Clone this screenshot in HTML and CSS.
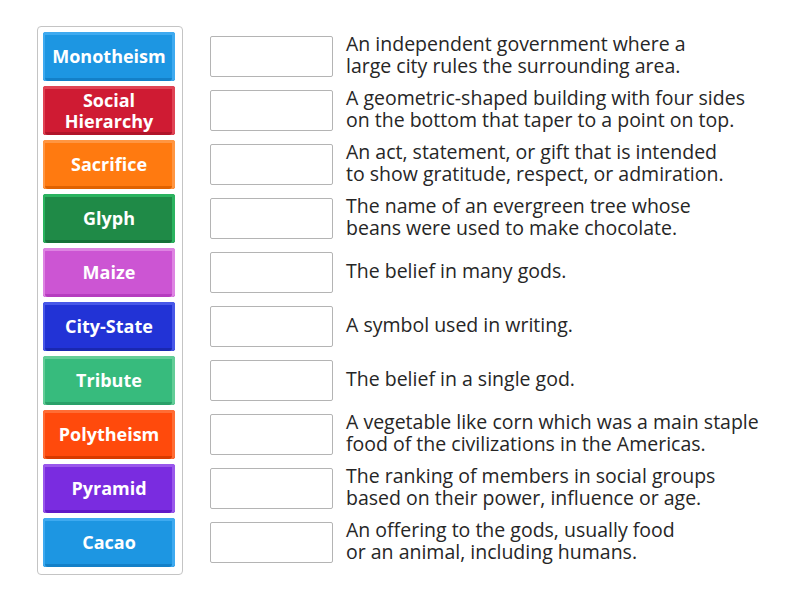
FILE: index.html
```html
<!DOCTYPE html>
<html>
<head>
<meta charset="utf-8">
<link rel="stylesheet" href="styles.css">
</head>
<body>
<div class="page">
  <div class="tiles">
    <div class="tile blue">Monotheism</div>
    <div class="tile red">Social<br>Hierarchy</div>
    <div class="tile orange">Sacrifice</div>
    <div class="tile green">Glyph</div>
    <div class="tile pink">Maize</div>
    <div class="tile indigo">City-State</div>
    <div class="tile mint">Tribute</div>
    <div class="tile vermilion">Polytheism</div>
    <div class="tile purple">Pyramid</div>
    <div class="tile blue">Cacao</div>
  </div>
  <div class="rows">
    <div class="row"><div class="slot"></div><div class="def">An independent government where a<br>large city rules the surrounding area.</div></div>
    <div class="row"><div class="slot"></div><div class="def">A geometric-shaped building with four sides<br>on the bottom that taper to a point on top.</div></div>
    <div class="row"><div class="slot"></div><div class="def">An act, statement, or gift that is intended<br>to show gratitude, respect, or admiration.</div></div>
    <div class="row"><div class="slot"></div><div class="def">The name of an evergreen tree whose<br>beans were used to make chocolate.</div></div>
    <div class="row"><div class="slot"></div><div class="def">The belief in many gods.</div></div>
    <div class="row"><div class="slot"></div><div class="def">A symbol used in writing.</div></div>
    <div class="row"><div class="slot"></div><div class="def">The belief in a single god.</div></div>
    <div class="row"><div class="slot"></div><div class="def">A vegetable like corn which was a main staple<br>food of the civilizations in the Americas.</div></div>
    <div class="row"><div class="slot"></div><div class="def">The ranking of members in social groups<br>based on their power, influence or age.</div></div>
    <div class="row"><div class="slot"></div><div class="def">An offering to the gods, usually food<br>or an animal, including humans.</div></div>
  </div>
</div>
</body>
</html>
```

FILE: styles.css
```css
html, body {
  margin: 0;
  padding: 0;
  background: #fff;
}
.page {
  display: flex;
  align-items: flex-start;
  padding: 26px 0 0 37px;
  font-family: "Open Sans", "Liberation Sans", sans-serif;
}
.tiles {
  display: flex;
  flex-direction: column;
  gap: 5px;
  width: 132px;
  padding: 5px 7px 7px 5px;
  border: 1px solid #c4c4c4;
  border-radius: 4px;
}
.tile {
  height: 49px;
  box-sizing: border-box;
  display: flex;
  align-items: center;
  justify-content: center;
  text-align: center;
  color: #fff;
  font-weight: 700;
  font-size: 18px;
  line-height: 21px;
  border-radius: 3px;
  background: var(--c);
  box-shadow: inset 0 3px 0 var(--l), inset -3px 0 0 var(--l), inset 2px 0 0 var(--l), inset 0 -3px 0 var(--d);
}
.blue { --c: #1d96e2; --l: #3eaaf0; --d: #1380c8; }
.red { --c: #cf1b33; --l: #e04354; --d: #b0142a; }
.orange { --c: #ff7a10; --l: #ff9642; --d: #e06200; }
.green { --c: #1f8a47; --l: #2bb35f; --d: #176f39; }
.pink { --c: #cc55d3; --l: #de84e2; --d: #b63cbf; }
.indigo { --c: #2233d6; --l: #4858e8; --d: #1a28b0; }
.mint { --c: #37bb7d; --l: #63cd97; --d: #2aa069; }
.vermilion { --c: #ff4a0c; --l: #ff6d35; --d: #d83a00; }
.purple { --c: #7a2ce0; --l: #9a58eb; --d: #6019c7; }
.rows {
  display: flex;
  flex-direction: column;
  gap: 5px;
  margin: 6px 0 0 27px;
}
.row {
  height: 49px;
  display: flex;
  align-items: center;
  gap: 13px;
}
.slot {
  width: 123px;
  height: 41px;
  box-sizing: border-box;
  border: 1px solid #b4b4b4;
  border-radius: 2px;
  background: #fff;
  flex: none;
}
.def {
  color: #262626;
  font-size: 19.5px;
  line-height: 22px;
  margin-top: -4px;
  white-space: nowrap;
}
```
